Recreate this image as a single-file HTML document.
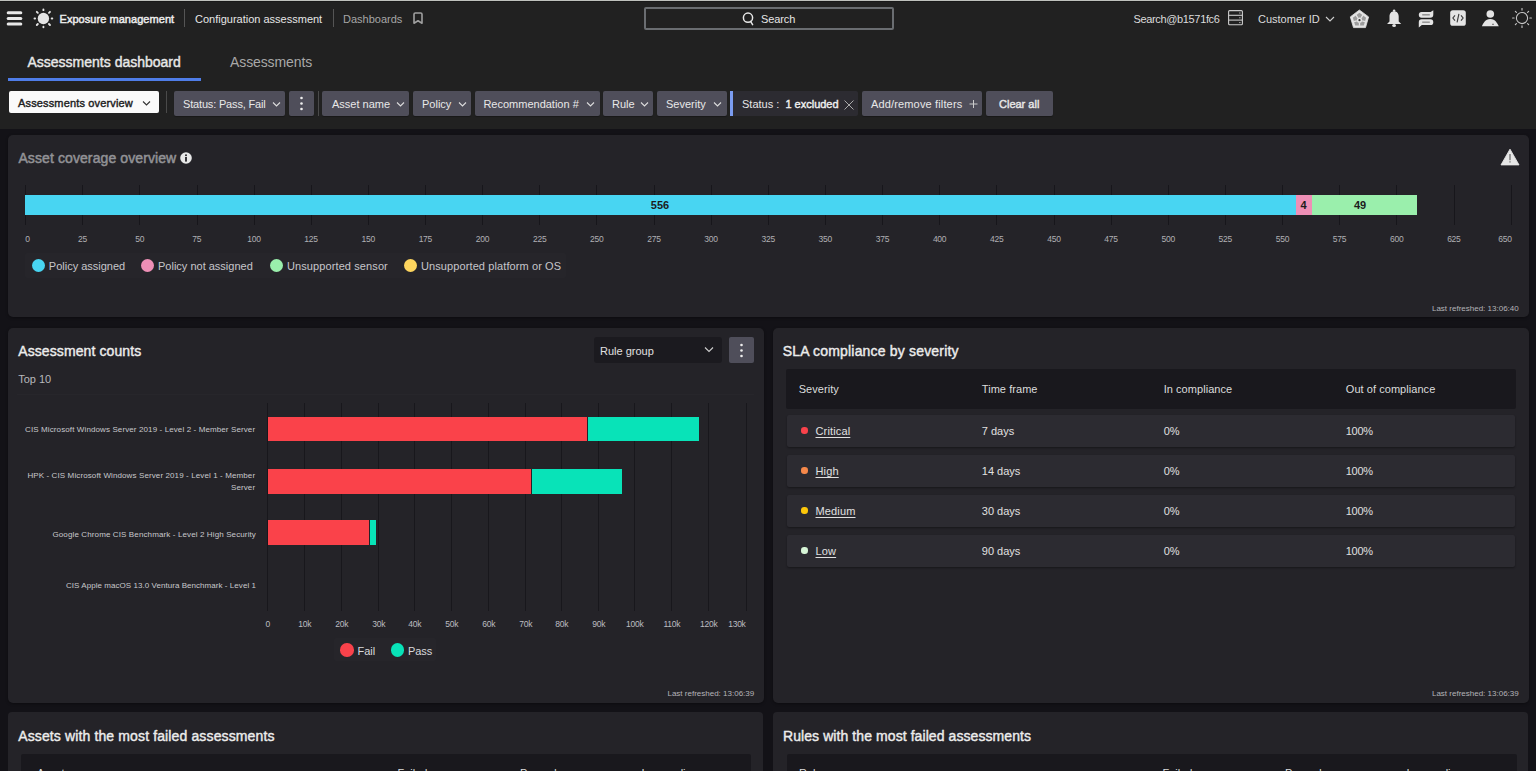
<!DOCTYPE html>
<html><head><meta charset="utf-8"><title>Assessments dashboard</title>
<style>
html,body{margin:0;padding:0;}
body{width:1536px;height:771px;overflow:hidden;position:relative;background:#131217;font-family:"Liberation Sans",sans-serif;}
.t{position:absolute;white-space:nowrap;}
svg{overflow:visible;}
</style></head><body>
<div style="position:absolute;left:0px;top:0px;width:1536px;height:129px;background:#212121;"></div>
<div style="position:absolute;left:0px;top:0px;width:1536px;height:1px;background:#bfc1bd;"></div>
<div style="position:absolute;left:0px;top:1px;width:1536px;height:1px;background:#191919;"></div>
<svg style="position:absolute;left:6px;top:10px;" width="17" height="17" viewBox="0 0 17 17"><g stroke="#e8e8e8" stroke-width="3" stroke-linecap="round"><line x1="2.2" y1="2.8" x2="14.8" y2="2.8"/><line x1="2.2" y1="8.45" x2="14.8" y2="8.45"/><line x1="2.2" y1="14.1" x2="14.8" y2="14.1"/></g></svg>
<svg style="position:absolute;left:33px;top:9px;" width="21" height="20" viewBox="0 0 21 20"><circle cx="10.4" cy="9.45" r="5.7" fill="#e4e4e4"/><g stroke="#e4e4e4" stroke-width="1.9" stroke-linecap="round"><line x1="18.70" y1="9.45" x2="19.30" y2="9.45"/><line x1="15.99" y1="15.04" x2="16.98" y2="16.03"/><line x1="10.40" y1="17.75" x2="10.40" y2="18.35"/><line x1="4.81" y1="15.04" x2="3.82" y2="16.03"/><line x1="2.10" y1="9.45" x2="1.50" y2="9.45"/><line x1="4.81" y1="3.86" x2="3.82" y2="2.87"/><line x1="10.40" y1="1.15" x2="10.40" y2="0.55"/><line x1="15.99" y1="3.86" x2="16.98" y2="2.87"/></g></svg>
<div class="t" style="left:59.5px;top:14.09px;font-size:11px;line-height:11px;color:#ececec;font-weight:400;letter-spacing:0.05px;-webkit-text-stroke:0.4px #ececec;-webkit-text-stroke:0.45px #ececec;">Exposure management</div>
<div style="position:absolute;left:184px;top:9px;width:1px;height:18px;background:#555;"></div>
<div class="t" style="left:195px;top:13.59px;font-size:11px;line-height:11px;color:#e6e6e6;font-weight:400;letter-spacing:0px;">Configuration assessment</div>
<div style="position:absolute;left:333px;top:9px;width:1px;height:18px;background:#555;"></div>
<div class="t" style="left:343px;top:13.59px;font-size:11px;line-height:11px;color:#a6a6a6;font-weight:400;letter-spacing:0px;">Dashboards</div>
<svg style="position:absolute;left:413px;top:12px;" width="11" height="13" viewBox="0 0 11 13"><path d="M1 2.3 Q1 1 2.3 1 H7.7 Q9 1 9 2.3 V11.2 L5 8.8 L1 11.2 Z" fill="none" stroke="#a0a0a0" stroke-width="1.6" stroke-linejoin="round"/></svg>
<div style="position:absolute;left:643.5px;top:7px;width:250px;height:23px;background:transparent;box-sizing:border-box;border:2px solid #6a6d71;border-radius:2px;"></div>
<svg style="position:absolute;left:741.5px;top:11.5px;" width="13" height="14" viewBox="0 0 13 14"><circle cx="6" cy="5.7" r="4.6" fill="none" stroke="#e8e8e8" stroke-width="1.5"/><line x1="8.6" y1="9.4" x2="10.6" y2="12.6" stroke="#e8e8e8" stroke-width="1.5" stroke-linecap="round"/></svg>
<div class="t" style="left:761px;top:14.09px;font-size:11px;line-height:11px;color:#e6e6e6;font-weight:400;letter-spacing:-0.1px;">Search</div>
<div class="t" style="left:1133.5px;top:13.59px;font-size:11px;line-height:11px;color:#dcdcdc;font-weight:400;letter-spacing:-0.35px;">Search@b1571fc6</div>
<svg style="position:absolute;left:1228px;top:9.5px;" width="15" height="16" viewBox="0 0 15 16"><g fill="none" stroke="#cccccc" stroke-width="1.1"><rect x="0.6" y="0.6" width="13.8" height="14.2" rx="1"/><line x1="0.6" y1="5.3" x2="14.4" y2="5.3"/><line x1="0.6" y1="10.1" x2="14.4" y2="10.1"/></g><g fill="#a0a0a0"><rect x="11" y="2.5" width="1.6" height="1"/><rect x="11" y="7.3" width="1.6" height="1"/><rect x="11" y="12.1" width="1.6" height="1"/></g></svg>
<div class="t" style="left:1258px;top:13.59px;font-size:11px;line-height:11px;color:#dcdcdc;font-weight:400;letter-spacing:0px;">Customer ID</div>
<svg style="position:absolute;left:1325px;top:15px;" width="10" height="8" viewBox="0 0 10 8"><path d="M1 2 L5 6 L9 2" fill="none" stroke="#cfcfcf" stroke-width="1.1"/></svg>
<svg style="position:absolute;left:1348.5px;top:8.5px;" width="21" height="20" viewBox="0 0 21 20"><polygon points="10.40,1.00 19.60,7.90 16.50,18.60 4.50,18.60 1.30,7.90" fill="#e4e4e4" stroke="#e4e4e4" stroke-width="0.8" stroke-linejoin="round"/><polygon points="10.43,3.86 17.05,8.82 14.82,16.53 6.18,16.53 3.88,8.82" fill="#9c9c9c"/><g stroke="#e4e4e4" stroke-width="1.3"><line x1="12.07" y1="8.84" x2="13.88" y2="6.14"/><line x1="13.14" y1="11.92" x2="16.16" y2="12.74"/><line x1="10.50" y1="13.79" x2="10.50" y2="16.75"/><line x1="7.84" y1="11.92" x2="4.80" y2="12.74"/><line x1="8.87" y1="8.84" x2="7.01" y2="6.14"/></g><circle cx="10.5" cy="11.2" r="2.6" fill="#e4e4e4"/><circle cx="10.5" cy="11.2" r="1.1" fill="#333"/></svg>
<svg style="position:absolute;left:1386px;top:9px;" width="17" height="19" viewBox="0 0 17 19"><circle cx="8.1" cy="1.6" r="1.2" fill="#e4e4e4"/><path d="M3.5 12.6 V7.6 C3.5 4.4 5.3 2.2 8.1 2.2 C10.9 2.2 12.7 4.4 12.7 7.6 V12.6 L15.2 14.9 H1.0 Z" fill="#e4e4e4"/><ellipse cx="8.1" cy="16.6" rx="1.9" ry="1.5" fill="#e4e4e4"/></svg>
<svg style="position:absolute;left:1417px;top:10px;" width="18" height="18" viewBox="0 0 18 18"><path d="M4.6 1.9 H13.6 L16.3 0.2 V4.6 Q16.3 7.8 13.2 7.8 H4.6 Q1.8 7.8 1.8 4.85 Q1.8 1.9 4.6 1.9 Z" fill="#e4e4e4"/><path d="M4.6 9.2 H13.4 Q16.3 9.2 16.3 12.15 Q16.3 15.1 13.4 15.1 H4.8 L1.8 17.5 V12.15 Q1.8 9.2 4.6 9.2 Z" fill="#e4e4e4"/><rect x="5.2" y="4.3" width="7.6" height="1.1" fill="#777"/><rect x="5.2" y="11.6" width="7.6" height="1.1" fill="#777"/></svg>
<svg style="position:absolute;left:1450.3px;top:10.2px;" width="16" height="16" viewBox="0 0 16 16"><rect x="0.2" y="0.2" width="15.6" height="15.6" rx="2.6" fill="#e4e4e4"/><g fill="none" stroke="#3c3c3c" stroke-width="1.15"><path d="M5 5.3 L2.9 8 L5 10.7"/><path d="M11 5.3 L13.1 8 L11 10.7"/><line x1="8.9" y1="3.8" x2="7.1" y2="12.3"/></g></svg>
<svg style="position:absolute;left:1481px;top:10px;" width="19" height="17" viewBox="0 0 19 17"><circle cx="9.3" cy="4" r="3.8" fill="#e4e4e4"/><path d="M0.9 16.2 C2.5 13.5 4 9.1 9.3 9.1 C14.6 9.1 16.1 13.5 17.8 16.2 Z" fill="#e4e4e4"/><rect x="11" y="13.8" width="2" height="0.9" rx="0.4" fill="#555"/></svg>
<svg style="position:absolute;left:1512.2px;top:8.4px;" width="20" height="20" viewBox="0 0 20 20"><circle cx="10" cy="10" r="5.6" fill="none" stroke="#c8c8c8" stroke-width="1.05"/><g stroke="#c4c4c4" stroke-width="1.15" stroke-linecap="round"><line x1="10.00" y1="2.10" x2="10.00" y2="0.60"/><line x1="15.59" y1="4.41" x2="16.65" y2="3.35"/><line x1="17.90" y1="10.00" x2="19.40" y2="10.00"/><line x1="15.59" y1="15.59" x2="16.65" y2="16.65"/><line x1="10.00" y1="17.90" x2="10.00" y2="19.40"/><line x1="4.41" y1="15.59" x2="3.35" y2="16.65"/><line x1="2.10" y1="10.00" x2="0.60" y2="10.00"/><line x1="4.41" y1="4.41" x2="3.35" y2="3.35"/></g></svg>
<div class="t" style="left:27.5px;top:55.45px;font-size:14px;line-height:14px;color:#e8e8e8;font-weight:400;letter-spacing:0px;-webkit-text-stroke:0.4px #e8e8e8;">Assessments dashboard</div>
<div style="position:absolute;left:8px;top:78px;width:193px;height:3px;background:#4f7de8;"></div>
<div class="t" style="left:230px;top:55.45px;font-size:14px;line-height:14px;color:#a8a8a8;font-weight:400;letter-spacing:-0.1px;">Assessments</div>
<div style="position:absolute;left:8.5px;top:90.5px;width:150px;height:22.5px;background:#fafafa;border-radius:2px;"></div>
<div class="t" style="left:18px;top:98.19px;font-size:11px;line-height:11px;color:#202020;font-weight:400;letter-spacing:0.15px;-webkit-text-stroke:0.4px #202020;">Assessments overview</div>
<svg style="position:absolute;left:142px;top:99.5px;" width="9" height="7" viewBox="0 0 9 7"><path d="M1 1.5 L4.5 5 L8 1.5" fill="none" stroke="#333" stroke-width="1.1"/></svg>
<div style="position:absolute;left:166px;top:91px;width:1px;height:22px;background:#4a4a4a;"></div>
<div style="position:absolute;left:174px;top:91px;width:110.5px;height:25px;background:#4f4e5a;border-radius:2px;box-shadow:0 1px 1px rgba(0,0,0,0.3);"></div>
<div class="t" style="left:183px;top:99.19px;font-size:11px;line-height:11px;color:#e8e8e8;font-weight:400;letter-spacing:-0.17px;">Status: Pass, Fail</div>
<svg style="position:absolute;left:271.5px;top:101px;" width="9" height="7" viewBox="0 0 9 7"><path d="M1 1.5 L4.5 5 L8 1.5" fill="none" stroke="#dcdcdc" stroke-width="1.1"/></svg>
<div style="position:absolute;left:289px;top:91px;width:25px;height:25px;background:#4f4e5a;border-radius:2px;box-shadow:0 1px 1px rgba(0,0,0,0.3);"></div>
<svg style="position:absolute;left:299px;top:95px;" width="5" height="17" viewBox="0 0 5 17"><g fill="#eee"><circle cx="2.5" cy="3" r="1.3"/><circle cx="2.5" cy="8.5" r="1.3"/><circle cx="2.5" cy="14" r="1.3"/></g></svg>
<div style="position:absolute;left:318px;top:91px;width:1px;height:25px;background:#4a4a4a;"></div>
<div style="position:absolute;left:322px;top:91px;width:86.69999999999999px;height:25px;background:#4f4e5a;border-radius:2px;box-shadow:0 1px 1px rgba(0,0,0,0.3);"></div>
<div class="t" style="left:332px;top:99.19px;font-size:11px;line-height:11px;color:#e8e8e8;font-weight:400;letter-spacing:0px;">Asset name</div>
<svg style="position:absolute;left:395.5px;top:101px;" width="9" height="7" viewBox="0 0 9 7"><path d="M1 1.5 L4.5 5 L8 1.5" fill="none" stroke="#dcdcdc" stroke-width="1.1"/></svg>
<div style="position:absolute;left:412.5px;top:91px;width:58.10000000000002px;height:25px;background:#4f4e5a;border-radius:2px;box-shadow:0 1px 1px rgba(0,0,0,0.3);"></div>
<div class="t" style="left:422px;top:99.19px;font-size:11px;line-height:11px;color:#e8e8e8;font-weight:400;letter-spacing:0px;">Policy</div>
<svg style="position:absolute;left:457.5px;top:101px;" width="9" height="7" viewBox="0 0 9 7"><path d="M1 1.5 L4.5 5 L8 1.5" fill="none" stroke="#dcdcdc" stroke-width="1.1"/></svg>
<div style="position:absolute;left:474.5px;top:91px;width:125.29999999999995px;height:25px;background:#4f4e5a;border-radius:2px;box-shadow:0 1px 1px rgba(0,0,0,0.3);"></div>
<div class="t" style="left:483.4px;top:99.19px;font-size:11px;line-height:11px;color:#e8e8e8;font-weight:400;letter-spacing:0px;">Recommendation #</div>
<svg style="position:absolute;left:585.5px;top:101px;" width="9" height="7" viewBox="0 0 9 7"><path d="M1 1.5 L4.5 5 L8 1.5" fill="none" stroke="#dcdcdc" stroke-width="1.1"/></svg>
<div style="position:absolute;left:603px;top:91px;width:50px;height:25px;background:#4f4e5a;border-radius:2px;box-shadow:0 1px 1px rgba(0,0,0,0.3);"></div>
<div class="t" style="left:612px;top:99.19px;font-size:11px;line-height:11px;color:#e8e8e8;font-weight:400;letter-spacing:0px;">Rule</div>
<svg style="position:absolute;left:639.5px;top:101px;" width="9" height="7" viewBox="0 0 9 7"><path d="M1 1.5 L4.5 5 L8 1.5" fill="none" stroke="#dcdcdc" stroke-width="1.1"/></svg>
<div style="position:absolute;left:657px;top:91px;width:69.79999999999995px;height:25px;background:#4f4e5a;border-radius:2px;box-shadow:0 1px 1px rgba(0,0,0,0.3);"></div>
<div class="t" style="left:666px;top:99.19px;font-size:11px;line-height:11px;color:#e8e8e8;font-weight:400;letter-spacing:0px;">Severity</div>
<svg style="position:absolute;left:712.5px;top:101px;" width="9" height="7" viewBox="0 0 9 7"><path d="M1 1.5 L4.5 5 L8 1.5" fill="none" stroke="#dcdcdc" stroke-width="1.1"/></svg>
<div style="position:absolute;left:729.5px;top:91px;width:3.5px;height:25px;background:#7b9cf0;"></div>
<div style="position:absolute;left:733px;top:91px;width:124.6px;height:25px;background:#2c2b31;border-radius:0 2px 2px 0;"></div>
<div class="t" style="left:742px;top:99.19px;font-size:11px;line-height:11px;color:#e6e6e6;font-weight:400;letter-spacing:0px;">Status :</div>
<div class="t" style="left:785.4px;top:99.19px;font-size:11px;line-height:11px;color:#f0f0f0;font-weight:400;letter-spacing:0px;-webkit-text-stroke:0.4px #f0f0f0;">1 excluded</div>
<svg style="position:absolute;left:843px;top:98.5px;" width="12" height="12" viewBox="0 0 12 12"><g stroke="#aaa" stroke-width="1"><line x1="1.5" y1="1.5" x2="10.5" y2="10.5"/><line x1="10.5" y1="1.5" x2="1.5" y2="10.5"/></g></svg>
<div style="position:absolute;left:861.5px;top:91px;width:120.5px;height:25px;background:#4f4e5a;border-radius:2px;box-shadow:0 1px 1px rgba(0,0,0,0.3);"></div>
<div class="t" style="left:871px;top:99.19px;font-size:11px;line-height:11px;color:#e8e8e8;font-weight:400;letter-spacing:0.15px;">Add/remove filters</div>
<svg style="position:absolute;left:968.5px;top:99px;" width="9" height="10" viewBox="0 0 9 10"><g stroke="#ccc" stroke-width="1"><line x1="4.5" y1="1" x2="4.5" y2="9"/><line x1="0.5" y1="5" x2="8.5" y2="5"/></g></svg>
<div style="position:absolute;left:985.8px;top:91px;width:66.79999999999995px;height:25px;background:#4f4e5a;border-radius:2px;box-shadow:0 1px 1px rgba(0,0,0,0.3);"></div>
<div class="t" style="left:999px;top:99.19px;font-size:11px;line-height:11px;color:#e8e8e8;font-weight:400;letter-spacing:0px;-webkit-text-stroke:0.4px #e8e8e8;">Clear all</div>
<div style="position:absolute;left:8px;top:135px;width:1520.5px;height:182px;background:#242328;border-radius:5px;box-shadow:0 1px 3px rgba(0,0,0,0.35);"></div>
<div class="t" style="left:18.4px;top:151.15px;font-size:14px;line-height:14px;color:#929296;font-weight:400;letter-spacing:0.1px;-webkit-text-stroke:0.4px #929296;-webkit-text-stroke:0.5px #929296;">Asset coverage overview</div>
<svg style="position:absolute;left:180px;top:151.5px;" width="12" height="12" viewBox="0 0 12 12"><circle cx="6" cy="6" r="5.8" fill="#e8e8e8"/><rect x="5.1" y="5" width="1.8" height="4.6" fill="#242328"/><circle cx="6" cy="3.2" r="1" fill="#242328"/></svg>
<svg style="position:absolute;left:1499.5px;top:147.6px;" width="20" height="18" viewBox="0 0 20 18"><path d="M10 1.2 L19 16.9 H1 Z" fill="#e6e6e6" stroke="#e6e6e6" stroke-width="0.9" stroke-linejoin="round"/><rect x="9.45" y="6" width="1.1" height="6.2" fill="#555"/><rect x="9.45" y="13.3" width="1.1" height="1.2" fill="#555"/></svg>
<div style="position:absolute;left:25px;top:185px;width:1px;height:40px;background:#17161b;"></div>
<div style="position:absolute;left:82px;top:185px;width:1px;height:40px;background:#17161b;"></div>
<div style="position:absolute;left:139px;top:185px;width:1px;height:40px;background:#17161b;"></div>
<div style="position:absolute;left:197px;top:185px;width:1px;height:40px;background:#17161b;"></div>
<div style="position:absolute;left:254px;top:185px;width:1px;height:40px;background:#17161b;"></div>
<div style="position:absolute;left:311px;top:185px;width:1px;height:40px;background:#17161b;"></div>
<div style="position:absolute;left:368px;top:185px;width:1px;height:40px;background:#17161b;"></div>
<div style="position:absolute;left:425px;top:185px;width:1px;height:40px;background:#17161b;"></div>
<div style="position:absolute;left:482px;top:185px;width:1px;height:40px;background:#17161b;"></div>
<div style="position:absolute;left:539px;top:185px;width:1px;height:40px;background:#17161b;"></div>
<div style="position:absolute;left:596px;top:185px;width:1px;height:40px;background:#17161b;"></div>
<div style="position:absolute;left:654px;top:185px;width:1px;height:40px;background:#17161b;"></div>
<div style="position:absolute;left:711px;top:185px;width:1px;height:40px;background:#17161b;"></div>
<div style="position:absolute;left:768px;top:185px;width:1px;height:40px;background:#17161b;"></div>
<div style="position:absolute;left:825px;top:185px;width:1px;height:40px;background:#17161b;"></div>
<div style="position:absolute;left:882px;top:185px;width:1px;height:40px;background:#17161b;"></div>
<div style="position:absolute;left:939px;top:185px;width:1px;height:40px;background:#17161b;"></div>
<div style="position:absolute;left:996px;top:185px;width:1px;height:40px;background:#17161b;"></div>
<div style="position:absolute;left:1054px;top:185px;width:1px;height:40px;background:#17161b;"></div>
<div style="position:absolute;left:1111px;top:185px;width:1px;height:40px;background:#17161b;"></div>
<div style="position:absolute;left:1168px;top:185px;width:1px;height:40px;background:#17161b;"></div>
<div style="position:absolute;left:1225px;top:185px;width:1px;height:40px;background:#17161b;"></div>
<div style="position:absolute;left:1282px;top:185px;width:1px;height:40px;background:#17161b;"></div>
<div style="position:absolute;left:1339px;top:185px;width:1px;height:40px;background:#17161b;"></div>
<div style="position:absolute;left:1396px;top:185px;width:1px;height:40px;background:#17161b;"></div>
<div style="position:absolute;left:1454px;top:185px;width:1px;height:40px;background:#17161b;"></div>
<div style="position:absolute;left:1511px;top:185px;width:1px;height:40px;background:#17161b;"></div>
<div style="position:absolute;left:25px;top:195px;width:1270.5px;height:20px;background:#48d5f2;"></div>
<div style="position:absolute;left:1295.5px;top:195px;width:16px;height:20px;background:#ee8fb6;"></div>
<div style="position:absolute;left:1311.5px;top:195px;width:105.5px;height:20px;background:#9aefac;"></div>
<div class="t" style="left:360px;width:600px;text-align:center;top:199.99px;font-size:11px;line-height:11px;color:#1c1c1c;font-weight:700;letter-spacing:0px;">556</div>
<div class="t" style="left:1003.5999999999999px;width:600px;text-align:center;top:199.99px;font-size:11px;line-height:11px;color:#1c1c1c;font-weight:700;letter-spacing:0px;">4</div>
<div class="t" style="left:1060px;width:600px;text-align:center;top:199.99px;font-size:11px;line-height:11px;color:#1c1c1c;font-weight:700;letter-spacing:0px;">49</div>
<div class="t" style="left:-272.6px;width:600px;text-align:center;top:235.40px;font-size:8.5px;line-height:8.5px;color:#b0b0b4;font-weight:400;letter-spacing:-0.25px;">0</div>
<div class="t" style="left:-217.46153846153845px;width:600px;text-align:center;top:235.40px;font-size:8.5px;line-height:8.5px;color:#b0b0b4;font-weight:400;letter-spacing:-0.25px;">25</div>
<div class="t" style="left:-160.3230769230769px;width:600px;text-align:center;top:235.40px;font-size:8.5px;line-height:8.5px;color:#b0b0b4;font-weight:400;letter-spacing:-0.25px;">50</div>
<div class="t" style="left:-103.18461538461537px;width:600px;text-align:center;top:235.40px;font-size:8.5px;line-height:8.5px;color:#b0b0b4;font-weight:400;letter-spacing:-0.25px;">75</div>
<div class="t" style="left:-46.04615384615383px;width:600px;text-align:center;top:235.40px;font-size:8.5px;line-height:8.5px;color:#b0b0b4;font-weight:400;letter-spacing:-0.25px;">100</div>
<div class="t" style="left:11.092307692307656px;width:600px;text-align:center;top:235.40px;font-size:8.5px;line-height:8.5px;color:#b0b0b4;font-weight:400;letter-spacing:-0.25px;">125</div>
<div class="t" style="left:68.23076923076923px;width:600px;text-align:center;top:235.40px;font-size:8.5px;line-height:8.5px;color:#b0b0b4;font-weight:400;letter-spacing:-0.25px;">150</div>
<div class="t" style="left:125.36923076923074px;width:600px;text-align:center;top:235.40px;font-size:8.5px;line-height:8.5px;color:#b0b0b4;font-weight:400;letter-spacing:-0.25px;">175</div>
<div class="t" style="left:182.5076923076923px;width:600px;text-align:center;top:235.40px;font-size:8.5px;line-height:8.5px;color:#b0b0b4;font-weight:400;letter-spacing:-0.25px;">200</div>
<div class="t" style="left:239.64615384615377px;width:600px;text-align:center;top:235.40px;font-size:8.5px;line-height:8.5px;color:#b0b0b4;font-weight:400;letter-spacing:-0.25px;">225</div>
<div class="t" style="left:296.78461538461534px;width:600px;text-align:center;top:235.40px;font-size:8.5px;line-height:8.5px;color:#b0b0b4;font-weight:400;letter-spacing:-0.25px;">250</div>
<div class="t" style="left:353.9230769230769px;width:600px;text-align:center;top:235.40px;font-size:8.5px;line-height:8.5px;color:#b0b0b4;font-weight:400;letter-spacing:-0.25px;">275</div>
<div class="t" style="left:411.0615384615385px;width:600px;text-align:center;top:235.40px;font-size:8.5px;line-height:8.5px;color:#b0b0b4;font-weight:400;letter-spacing:-0.25px;">300</div>
<div class="t" style="left:468.19999999999993px;width:600px;text-align:center;top:235.40px;font-size:8.5px;line-height:8.5px;color:#b0b0b4;font-weight:400;letter-spacing:-0.25px;">325</div>
<div class="t" style="left:525.3384615384615px;width:600px;text-align:center;top:235.40px;font-size:8.5px;line-height:8.5px;color:#b0b0b4;font-weight:400;letter-spacing:-0.25px;">350</div>
<div class="t" style="left:582.4769230769231px;width:600px;text-align:center;top:235.40px;font-size:8.5px;line-height:8.5px;color:#b0b0b4;font-weight:400;letter-spacing:-0.25px;">375</div>
<div class="t" style="left:639.6153846153846px;width:600px;text-align:center;top:235.40px;font-size:8.5px;line-height:8.5px;color:#b0b0b4;font-weight:400;letter-spacing:-0.25px;">400</div>
<div class="t" style="left:696.7538461538461px;width:600px;text-align:center;top:235.40px;font-size:8.5px;line-height:8.5px;color:#b0b0b4;font-weight:400;letter-spacing:-0.25px;">425</div>
<div class="t" style="left:753.8923076923077px;width:600px;text-align:center;top:235.40px;font-size:8.5px;line-height:8.5px;color:#b0b0b4;font-weight:400;letter-spacing:-0.25px;">450</div>
<div class="t" style="left:811.0307692307692px;width:600px;text-align:center;top:235.40px;font-size:8.5px;line-height:8.5px;color:#b0b0b4;font-weight:400;letter-spacing:-0.25px;">475</div>
<div class="t" style="left:868.1692307692308px;width:600px;text-align:center;top:235.40px;font-size:8.5px;line-height:8.5px;color:#b0b0b4;font-weight:400;letter-spacing:-0.25px;">500</div>
<div class="t" style="left:925.3076923076924px;width:600px;text-align:center;top:235.40px;font-size:8.5px;line-height:8.5px;color:#b0b0b4;font-weight:400;letter-spacing:-0.25px;">525</div>
<div class="t" style="left:982.446153846154px;width:600px;text-align:center;top:235.40px;font-size:8.5px;line-height:8.5px;color:#b0b0b4;font-weight:400;letter-spacing:-0.25px;">550</div>
<div class="t" style="left:1039.5846153846155px;width:600px;text-align:center;top:235.40px;font-size:8.5px;line-height:8.5px;color:#b0b0b4;font-weight:400;letter-spacing:-0.25px;">575</div>
<div class="t" style="left:1096.723076923077px;width:600px;text-align:center;top:235.40px;font-size:8.5px;line-height:8.5px;color:#b0b0b4;font-weight:400;letter-spacing:-0.25px;">600</div>
<div class="t" style="left:1153.8615384615384px;width:600px;text-align:center;top:235.40px;font-size:8.5px;line-height:8.5px;color:#b0b0b4;font-weight:400;letter-spacing:-0.25px;">625</div>
<div class="t" style="left:1205.0px;width:600px;text-align:center;top:235.40px;font-size:8.5px;line-height:8.5px;color:#b0b0b4;font-weight:400;letter-spacing:-0.25px;">650</div>
<div style="position:absolute;left:25px;top:253px;width:541px;height:25px;background:#26252a;border-radius:2px;"></div>
<div style="position:absolute;left:32.0px;top:259.0px;width:13.0px;height:13.0px;background:#48d5f2;border-radius:50%;"></div>
<div class="t" style="left:48.8px;top:261.29px;font-size:11px;line-height:11px;color:#c6c6ca;font-weight:400;letter-spacing:0px;">Policy assigned</div>
<div style="position:absolute;left:141.3px;top:259.0px;width:13.0px;height:13.0px;background:#ee8fb6;border-radius:50%;"></div>
<div class="t" style="left:158px;top:261.29px;font-size:11px;line-height:11px;color:#c6c6ca;font-weight:400;letter-spacing:0px;">Policy not assigned</div>
<div style="position:absolute;left:270.0px;top:259.0px;width:13.0px;height:13.0px;background:#9aefac;border-radius:50%;"></div>
<div class="t" style="left:287px;top:261.29px;font-size:11px;line-height:11px;color:#c6c6ca;font-weight:400;letter-spacing:0.1px;">Unsupported sensor</div>
<div style="position:absolute;left:404.0px;top:259.0px;width:13.0px;height:13.0px;background:#fdd55e;border-radius:50%;"></div>
<div class="t" style="left:421px;top:261.29px;font-size:11px;line-height:11px;color:#c6c6ca;font-weight:400;letter-spacing:0.1px;">Unsupported platform or OS</div>
<div class="t" style="right:17.299999999999955px;text-align:right;top:304.93px;font-size:8px;line-height:8px;color:#b4b4b8;font-weight:400;letter-spacing:0px;">Last refreshed: 13:06:40</div>
<div style="position:absolute;left:8px;top:328px;width:755.5px;height:374.5px;background:#242328;border-radius:5px;box-shadow:0 1px 3px rgba(0,0,0,0.35);"></div>
<div class="t" style="left:18.2px;top:343.85px;font-size:14px;line-height:14px;color:#ececec;font-weight:400;letter-spacing:0.1px;-webkit-text-stroke:0.4px #ececec;">Assessment counts</div>
<div class="t" style="left:18.2px;top:374.49px;font-size:11px;line-height:11px;color:#b8b8bc;font-weight:400;letter-spacing:0px;">Top 10</div>
<div style="position:absolute;left:593.5px;top:337px;width:128.5px;height:25.5px;background:#1b1a1f;border-radius:3px;"></div>
<div class="t" style="left:600px;top:345.69px;font-size:11px;line-height:11px;color:#e0e0e0;font-weight:400;letter-spacing:0px;">Rule group</div>
<svg style="position:absolute;left:704px;top:346px;" width="10" height="7" viewBox="0 0 10 7"><path d="M1 1.5 L5 5.5 L9 1.5" fill="none" stroke="#cfcfcf" stroke-width="1.1"/></svg>
<div style="position:absolute;left:728.5px;top:337px;width:25.5px;height:25.5px;background:#4f4e5a;border-radius:2px;"></div>
<svg style="position:absolute;left:738.5px;top:341.5px;" width="5" height="17" viewBox="0 0 5 17"><g fill="#eee"><circle cx="2.5" cy="3" r="1.3"/><circle cx="2.5" cy="8.5" r="1.3"/><circle cx="2.5" cy="14" r="1.3"/></g></svg>
<div style="position:absolute;left:17px;top:394px;width:737px;height:0.5px;background:#27262b;"></div>
<div style="position:absolute;left:267px;top:403px;width:1px;height:208px;background:#18171c;"></div>
<div style="position:absolute;left:304px;top:403px;width:1px;height:208px;background:#18171c;"></div>
<div style="position:absolute;left:341px;top:403px;width:1px;height:208px;background:#18171c;"></div>
<div style="position:absolute;left:378px;top:403px;width:1px;height:208px;background:#18171c;"></div>
<div style="position:absolute;left:414px;top:403px;width:1px;height:208px;background:#18171c;"></div>
<div style="position:absolute;left:451px;top:403px;width:1px;height:208px;background:#18171c;"></div>
<div style="position:absolute;left:488px;top:403px;width:1px;height:208px;background:#18171c;"></div>
<div style="position:absolute;left:525px;top:403px;width:1px;height:208px;background:#18171c;"></div>
<div style="position:absolute;left:561px;top:403px;width:1px;height:208px;background:#18171c;"></div>
<div style="position:absolute;left:598px;top:403px;width:1px;height:208px;background:#18171c;"></div>
<div style="position:absolute;left:634px;top:403px;width:1px;height:208px;background:#18171c;"></div>
<div style="position:absolute;left:671px;top:403px;width:1px;height:208px;background:#18171c;"></div>
<div style="position:absolute;left:708px;top:403px;width:1px;height:208px;background:#18171c;"></div>
<div style="position:absolute;left:746px;top:403px;width:1px;height:208px;background:#18171c;"></div>
<div style="position:absolute;left:268px;top:416.5px;width:319px;height:24.5px;background:#fa424a;"></div>
<div style="position:absolute;left:588px;top:416.5px;width:110.8px;height:24.5px;background:#08e3b8;"></div>
<div style="position:absolute;left:268px;top:469px;width:262.5px;height:24.5px;background:#fa424a;"></div>
<div style="position:absolute;left:531.5px;top:469px;width:90.2px;height:24.5px;background:#08e3b8;"></div>
<div style="position:absolute;left:268px;top:520px;width:101px;height:24.5px;background:#fa424a;"></div>
<div style="position:absolute;left:370px;top:520px;width:5.5px;height:24.5px;background:#08e3b8;"></div>
<div class="t" style="right:1280.8px;text-align:right;top:425.73px;font-size:8px;line-height:8px;color:#c8c8cc;font-weight:400;letter-spacing:0.11px;">CIS Microsoft Windows Server 2019 - Level 2 - Member Server</div>
<div class="t" style="right:1280.8px;text-align:right;top:472.13px;font-size:8px;line-height:8px;color:#c8c8cc;font-weight:400;letter-spacing:0.11px;">HPK - CIS Microsoft Windows Server 2019 - Level 1 - Member</div>
<div class="t" style="right:1280.8px;text-align:right;top:483.83px;font-size:8px;line-height:8px;color:#c8c8cc;font-weight:400;letter-spacing:0.11px;">Server</div>
<div class="t" style="right:1280px;text-align:right;top:530.53px;font-size:8px;line-height:8px;color:#c8c8cc;font-weight:400;letter-spacing:0.12px;">Google Chrome CIS Benchmark - Level 2 High Security</div>
<div class="t" style="right:1280px;text-align:right;top:582.23px;font-size:8px;line-height:8px;color:#c8c8cc;font-weight:400;letter-spacing:0.05px;">CIS Apple macOS 13.0 Ventura Benchmark - Level 1</div>
<div class="t" style="left:-32.19999999999999px;width:600px;text-align:center;top:620.00px;font-size:8.5px;line-height:8.5px;color:#bcbcc0;font-weight:400;letter-spacing:-0.25px;">0</div>
<div class="t" style="left:4.800000000000011px;width:600px;text-align:center;top:620.00px;font-size:8.5px;line-height:8.5px;color:#bcbcc0;font-weight:400;letter-spacing:-0.25px;">10k</div>
<div class="t" style="left:41.80000000000001px;width:600px;text-align:center;top:620.00px;font-size:8.5px;line-height:8.5px;color:#bcbcc0;font-weight:400;letter-spacing:-0.25px;">20k</div>
<div class="t" style="left:78.80000000000001px;width:600px;text-align:center;top:620.00px;font-size:8.5px;line-height:8.5px;color:#bcbcc0;font-weight:400;letter-spacing:-0.25px;">30k</div>
<div class="t" style="left:114.80000000000001px;width:600px;text-align:center;top:620.00px;font-size:8.5px;line-height:8.5px;color:#bcbcc0;font-weight:400;letter-spacing:-0.25px;">40k</div>
<div class="t" style="left:151.8px;width:600px;text-align:center;top:620.00px;font-size:8.5px;line-height:8.5px;color:#bcbcc0;font-weight:400;letter-spacing:-0.25px;">50k</div>
<div class="t" style="left:188.8px;width:600px;text-align:center;top:620.00px;font-size:8.5px;line-height:8.5px;color:#bcbcc0;font-weight:400;letter-spacing:-0.25px;">60k</div>
<div class="t" style="left:225.79999999999995px;width:600px;text-align:center;top:620.00px;font-size:8.5px;line-height:8.5px;color:#bcbcc0;font-weight:400;letter-spacing:-0.25px;">70k</div>
<div class="t" style="left:261.79999999999995px;width:600px;text-align:center;top:620.00px;font-size:8.5px;line-height:8.5px;color:#bcbcc0;font-weight:400;letter-spacing:-0.25px;">80k</div>
<div class="t" style="left:298.79999999999995px;width:600px;text-align:center;top:620.00px;font-size:8.5px;line-height:8.5px;color:#bcbcc0;font-weight:400;letter-spacing:-0.25px;">90k</div>
<div class="t" style="left:334.79999999999995px;width:600px;text-align:center;top:620.00px;font-size:8.5px;line-height:8.5px;color:#bcbcc0;font-weight:400;letter-spacing:-0.25px;">100k</div>
<div class="t" style="left:371.79999999999995px;width:600px;text-align:center;top:620.00px;font-size:8.5px;line-height:8.5px;color:#bcbcc0;font-weight:400;letter-spacing:-0.25px;">110k</div>
<div class="t" style="left:408.79999999999995px;width:600px;text-align:center;top:620.00px;font-size:8.5px;line-height:8.5px;color:#bcbcc0;font-weight:400;letter-spacing:-0.25px;">120k</div>
<div class="t" style="left:436.9px;width:600px;text-align:center;top:620.00px;font-size:8.5px;line-height:8.5px;color:#bcbcc0;font-weight:400;letter-spacing:-0.25px;">130k</div>
<div style="position:absolute;left:334px;top:638px;width:102px;height:23px;background:#26252a;border-radius:2px;"></div>
<div style="position:absolute;left:340.4px;top:643.4000000000001px;width:13.6px;height:13.6px;background:#f9424b;border-radius:50%;"></div>
<div class="t" style="left:357.5px;top:646.44px;font-size:11px;line-height:11px;color:#d8d8dc;font-weight:400;letter-spacing:0px;">Fail</div>
<div style="position:absolute;left:390.7px;top:643.4000000000001px;width:13.6px;height:13.6px;background:#08e3b8;border-radius:50%;"></div>
<div class="t" style="left:408px;top:646.44px;font-size:11px;line-height:11px;color:#d8d8dc;font-weight:400;letter-spacing:-0.1px;">Pass</div>
<div class="t" style="right:781.8px;text-align:right;top:690.23px;font-size:8px;line-height:8px;color:#b4b4b8;font-weight:400;letter-spacing:0px;">Last refreshed: 13:06:39</div>
<div style="position:absolute;left:773px;top:328px;width:755.5px;height:374.5px;background:#242328;border-radius:5px;box-shadow:0 1px 3px rgba(0,0,0,0.35);"></div>
<div class="t" style="left:782.8px;top:344.15px;font-size:14px;line-height:14px;color:#ececec;font-weight:400;letter-spacing:0.18px;-webkit-text-stroke:0.4px #ececec;">SLA compliance by severity</div>
<div style="position:absolute;left:786px;top:369px;width:730px;height:39.5px;background:#19181d;border-radius:2px;"></div>
<div class="t" style="left:798.7px;top:384.19px;font-size:11px;line-height:11px;color:#dcdcdc;font-weight:400;letter-spacing:0.05px;">Severity</div>
<div class="t" style="left:981.8px;top:384.19px;font-size:11px;line-height:11px;color:#dcdcdc;font-weight:400;letter-spacing:0.05px;">Time frame</div>
<div class="t" style="left:1163.7px;top:384.19px;font-size:11px;line-height:11px;color:#dcdcdc;font-weight:400;letter-spacing:0.05px;">In compliance</div>
<div class="t" style="left:1345.8px;top:384.19px;font-size:11px;line-height:11px;color:#dcdcdc;font-weight:400;letter-spacing:0.05px;">Out of compliance</div>
<div style="position:absolute;left:787px;top:415px;width:728px;height:32px;background:#2c2b31;border-radius:2px;box-shadow:0 1px 2px rgba(0,0,0,0.35);"></div>
<div style="position:absolute;left:801.3px;top:427.3px;width:6.4px;height:6.4px;background:#f9424b;border-radius:50%;"></div>
<div class="t" style="left:815.5px;top:426.39px;font-size:11px;line-height:11px;color:#e0e0e0;font-weight:400;letter-spacing:0.15px;text-decoration:underline;text-underline-offset:2px;">Critical</div>
<div class="t" style="left:981.8px;top:426.39px;font-size:11px;line-height:11px;color:#e0e0e0;font-weight:400;letter-spacing:0px;">7 days</div>
<div class="t" style="left:1163.7px;top:426.39px;font-size:11px;line-height:11px;color:#e0e0e0;font-weight:400;letter-spacing:0px;">0%</div>
<div class="t" style="left:1345.8px;top:426.39px;font-size:11px;line-height:11px;color:#e0e0e0;font-weight:400;letter-spacing:-0.3px;">100%</div>
<div style="position:absolute;left:787px;top:455px;width:728px;height:32px;background:#2c2b31;border-radius:2px;box-shadow:0 1px 2px rgba(0,0,0,0.35);"></div>
<div style="position:absolute;left:801.3px;top:467.3px;width:6.4px;height:6.4px;background:#f6884a;border-radius:50%;"></div>
<div class="t" style="left:815.5px;top:466.39px;font-size:11px;line-height:11px;color:#e0e0e0;font-weight:400;letter-spacing:0.15px;text-decoration:underline;text-underline-offset:2px;">High</div>
<div class="t" style="left:981.8px;top:466.39px;font-size:11px;line-height:11px;color:#e0e0e0;font-weight:400;letter-spacing:0px;">14 days</div>
<div class="t" style="left:1163.7px;top:466.39px;font-size:11px;line-height:11px;color:#e0e0e0;font-weight:400;letter-spacing:0px;">0%</div>
<div class="t" style="left:1345.8px;top:466.39px;font-size:11px;line-height:11px;color:#e0e0e0;font-weight:400;letter-spacing:-0.3px;">100%</div>
<div style="position:absolute;left:787px;top:495px;width:728px;height:32px;background:#2c2b31;border-radius:2px;box-shadow:0 1px 2px rgba(0,0,0,0.35);"></div>
<div style="position:absolute;left:801.3px;top:507.3px;width:6.4px;height:6.4px;background:#fcc70a;border-radius:50%;"></div>
<div class="t" style="left:815.5px;top:506.39px;font-size:11px;line-height:11px;color:#e0e0e0;font-weight:400;letter-spacing:0.15px;text-decoration:underline;text-underline-offset:2px;">Medium</div>
<div class="t" style="left:981.8px;top:506.39px;font-size:11px;line-height:11px;color:#e0e0e0;font-weight:400;letter-spacing:0px;">30 days</div>
<div class="t" style="left:1163.7px;top:506.39px;font-size:11px;line-height:11px;color:#e0e0e0;font-weight:400;letter-spacing:0px;">0%</div>
<div class="t" style="left:1345.8px;top:506.39px;font-size:11px;line-height:11px;color:#e0e0e0;font-weight:400;letter-spacing:-0.3px;">100%</div>
<div style="position:absolute;left:787px;top:535px;width:728px;height:32px;background:#2c2b31;border-radius:2px;box-shadow:0 1px 2px rgba(0,0,0,0.35);"></div>
<div style="position:absolute;left:801.3px;top:547.3px;width:6.4px;height:6.4px;background:#d6f5d6;border-radius:50%;"></div>
<div class="t" style="left:815.5px;top:546.39px;font-size:11px;line-height:11px;color:#e0e0e0;font-weight:400;letter-spacing:0.15px;text-decoration:underline;text-underline-offset:2px;">Low</div>
<div class="t" style="left:981.8px;top:546.39px;font-size:11px;line-height:11px;color:#e0e0e0;font-weight:400;letter-spacing:0px;">90 days</div>
<div class="t" style="left:1163.7px;top:546.39px;font-size:11px;line-height:11px;color:#e0e0e0;font-weight:400;letter-spacing:0px;">0%</div>
<div class="t" style="left:1345.8px;top:546.39px;font-size:11px;line-height:11px;color:#e0e0e0;font-weight:400;letter-spacing:-0.3px;">100%</div>
<div class="t" style="right:17.299999999999955px;text-align:right;top:690.23px;font-size:8px;line-height:8px;color:#b4b4b8;font-weight:400;letter-spacing:0px;">Last refreshed: 13:06:39</div>
<div style="position:absolute;left:8px;top:712px;width:755px;height:70px;background:#242328;border-radius:4px;"></div>
<div class="t" style="left:18.2px;top:728.95px;font-size:14px;line-height:14px;color:#ececec;font-weight:400;letter-spacing:0.13px;-webkit-text-stroke:0.4px #ececec;">Assets with the most failed assessments</div>
<div style="position:absolute;left:21px;top:754px;width:730px;height:30px;background:#19181d;border-radius:2px;"></div>
<div class="t" style="left:37px;top:768.29px;font-size:11px;line-height:11px;color:#dcdcdc;font-weight:400;letter-spacing:0px;">Asset</div>
<div class="t" style="left:397.5px;top:768.29px;font-size:11px;line-height:11px;color:#dcdcdc;font-weight:400;letter-spacing:0px;">Failed</div>
<div class="t" style="left:520px;top:768.29px;font-size:11px;line-height:11px;color:#dcdcdc;font-weight:400;letter-spacing:0px;">Passed</div>
<div class="t" style="left:641.5px;top:768.29px;font-size:11px;line-height:11px;color:#dcdcdc;font-weight:400;letter-spacing:0px;">In compliance</div>
<div style="position:absolute;left:773px;top:712px;width:755px;height:70px;background:#242328;border-radius:4px;"></div>
<div class="t" style="left:783px;top:729.15px;font-size:14px;line-height:14px;color:#ececec;font-weight:400;letter-spacing:0.08px;-webkit-text-stroke:0.4px #ececec;">Rules with the most failed assessments</div>
<div style="position:absolute;left:786.5px;top:754px;width:730px;height:30px;background:#19181d;border-radius:2px;"></div>
<div class="t" style="left:799px;top:768.29px;font-size:11px;line-height:11px;color:#dcdcdc;font-weight:400;letter-spacing:0px;">Rule</div>
<div class="t" style="left:1162.5px;top:768.29px;font-size:11px;line-height:11px;color:#dcdcdc;font-weight:400;letter-spacing:0px;">Failed</div>
<div class="t" style="left:1285px;top:768.29px;font-size:11px;line-height:11px;color:#dcdcdc;font-weight:400;letter-spacing:0px;">Passed</div>
<div class="t" style="left:1406.5px;top:768.29px;font-size:11px;line-height:11px;color:#dcdcdc;font-weight:400;letter-spacing:0px;">In compliance</div>
</body></html>
